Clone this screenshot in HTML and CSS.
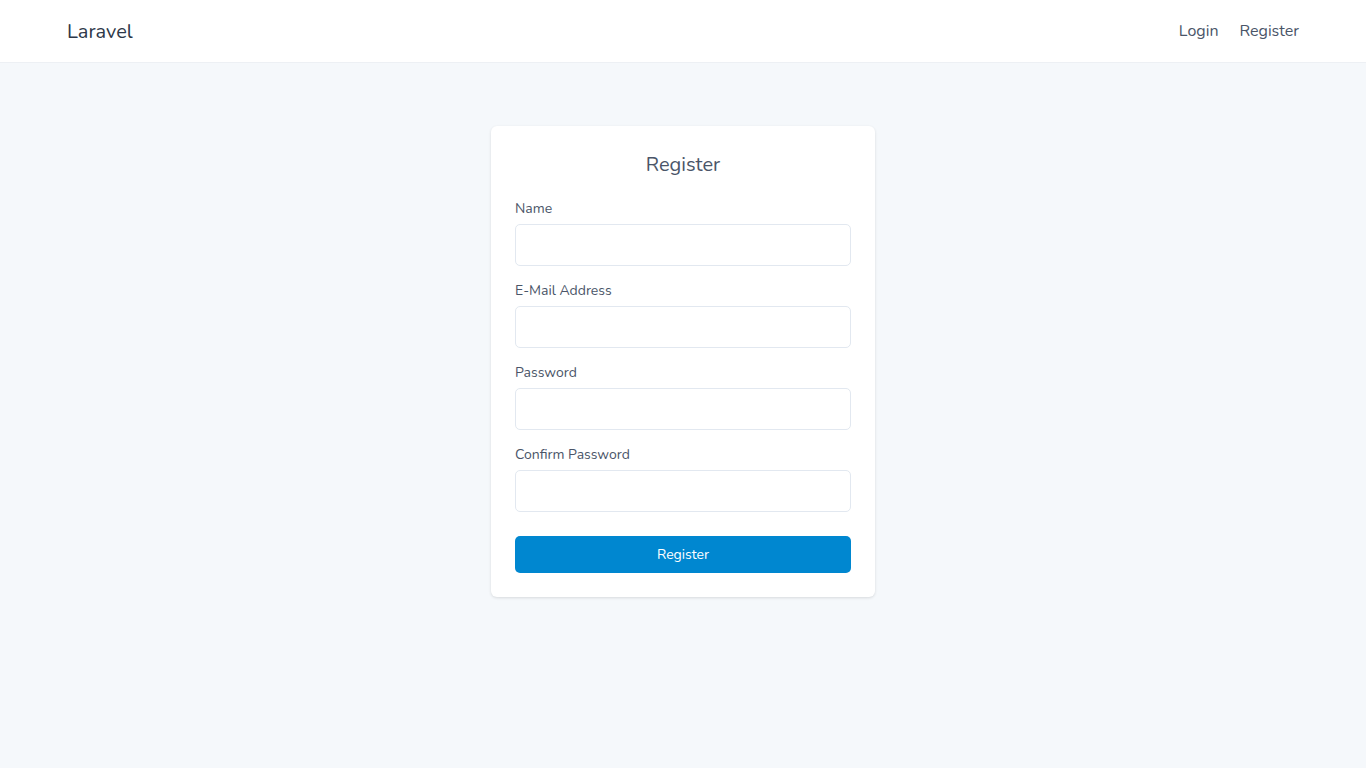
FILE: index.html
```html
<!DOCTYPE html>
<html lang="en">

<head>
    <meta charset="UTF-8">
    <meta name="viewport" content="width=device-width, initial-scale=1.0">
    <title>Register - Laravel</title>
    <link rel="stylesheet" href="styles.css">
</head>

<body>
    <!-- Top navigation -->
    <nav class="navbar">
        <div class="container nav-inner">
            <a class="brand" href="#">Laravel</a>
            <div class="nav-links">
                <a href="#">Login</a>
                <a href="#">Register</a>
            </div>
        </div>
    </nav>

    <!-- Register card -->
    <main class="content">
        <div class="card">
            <h1 class="card-title">Register</h1>
            <form>
                <div class="field">
                    <label for="name">Name</label>
                    <input id="name" type="text">
                </div>
                <div class="field">
                    <label for="email">E-Mail Address</label>
                    <input id="email" type="email">
                </div>
                <div class="field">
                    <label for="password">Password</label>
                    <input id="password" type="password">
                </div>
                <div class="field">
                    <label for="password-confirm">Confirm Password</label>
                    <input id="password-confirm" type="password">
                </div>
                <button type="submit" class="btn">Register</button>
            </form>
        </div>
    </main>
</body>

</html>
```

FILE: styles.css
```css
body {
    font-family: "Nunito", "Lato", "Noto Sans", sans-serif;
    margin: 0;
    background-color: #f5f8fb;
    color: #4a5568;
    min-height: 100vh;
}

a {
    text-decoration: none;
}

.container {
    box-sizing: border-box;
    max-width: 1280px;
    margin: 0 auto;
    padding: 0 24px;
}

.navbar {
    background-color: white;
    border-bottom: 1px solid #edf0f4;
    height: 62px;
}

.nav-inner {
    display: flex;
    justify-content: space-between;
    align-items: center;
    height: 100%;
}

.brand {
    font-size: 20px;
    color: #2d3748;
}

.nav-links {
    display: flex;
    gap: 21px;
}

.nav-links a {
    font-size: 16px;
    color: #4a5568;
}

.content {
    display: flex;
    justify-content: center;
    padding-top: 63px;
}

.card {
    width: 384px;
    box-sizing: border-box;
    background-color: white;
    border-radius: 6px;
    box-shadow: 0px 1px 3px rgba(0, 0, 0, 0.12);
    padding: 24px;
}

.card-title {
    font-size: 20px;
    font-weight: normal;
    text-align: center;
    color: #4a5568;
    margin: 1px 0 21px;
}

.field {
    margin-bottom: 15px;
}

.field label {
    display: block;
    font-size: 14px;
    color: #4a5568;
    margin-bottom: 6px;
}

.field input {
    display: block;
    width: 100%;
    box-sizing: border-box;
    height: 42px;
    border: 1px solid #e2e8f0;
    border-radius: 5px;
    font-family: inherit;
    font-size: 16px;
    padding: 8px 12px;
}

.btn {
    display: block;
    width: 100%;
    height: 37px;
    margin-top: 24px;
    background-color: #0087d0;
    border: none;
    border-radius: 5px;
    color: white;
    font-family: inherit;
    font-size: 14px;
    cursor: pointer;
}
```
